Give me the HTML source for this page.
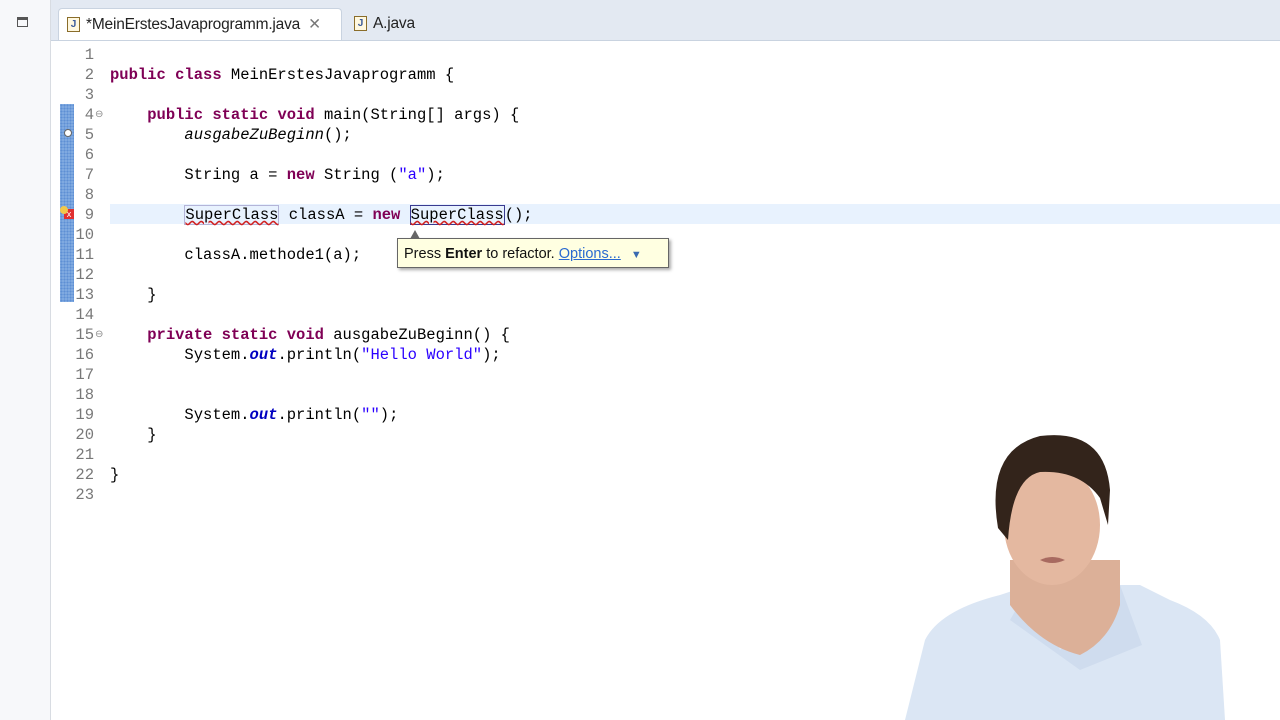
<!DOCTYPE html>
<html><head><meta charset="utf-8"><style>
body{margin:0;width:1280px;height:720px;background:#fff;position:relative;overflow:hidden;font-family:"Liberation Sans",sans-serif}
.side{position:absolute;left:0;top:0;width:50px;height:720px;background:#f7f8fa;border-right:1px solid #d8dce2}
.tabbar{position:absolute;left:51px;top:0;width:1229px;height:40px;background:#e3e9f2;border-bottom:1px solid #c9d3e0}
.tab{position:absolute;top:8px;height:32px;font-size:15.5px;line-height:32px;color:#222;letter-spacing:-0.2px}
.ic{display:inline-block;width:11px;height:13px;border:1px solid #8a6d2a;background:#fff8e0;font-size:10px;line-height:13px;text-align:center;color:#3a5a9a;font-weight:bold;vertical-align:middle;margin-right:6px;letter-spacing:0}
.gut{position:absolute;left:60px;top:104px;width:14px;height:198px;background:#7fa9e0;background-image:radial-gradient(#5e8fd4 1px,transparent 1px);background-size:3px 3px}
.ln{position:absolute;left:70px;width:24px;text-align:right;font:15.5px/20px "Liberation Mono",monospace;color:#787878}
.code{position:absolute;left:110px;font:15.5px/20px "Liberation Mono",monospace;color:#000;white-space:pre}
.k{color:#7f0055;font-weight:bold}.s{color:#2a00ff}.i{font-style:italic}.o{color:#0000c0;font-style:italic;font-weight:bold}
.hl{position:absolute;left:110px;top:204px;width:1170px;height:20px;background:#e8f2fe}
</style></head><body>
<div class="side"><div style="position:absolute;left:17px;top:17px;width:11px;height:10px;border:1px solid #555;border-top-width:3px;box-sizing:border-box"></div></div>
<div class="tabbar">
<div class="tab" style="left:7px;width:284px;background:#fff;border:1px solid #c9d3e0;border-bottom:none;border-radius:4px 4px 0 0;padding-left:8px;box-sizing:border-box"><span class="ic">J</span>*MeinErstesJavaprogramm.java <span style="color:#777;margin-left:4px">✕</span></div>
<div class="tab" style="left:303px"><span class="ic">J</span>A.java</div>
</div>
<div class="hl"></div>
<div class="gut"></div>
<div style="position:absolute;left:64px;top:129px;width:6px;height:6px;border:1px solid #666;border-radius:50%;background:#fff"></div>
<div style="position:absolute;left:64px;top:209px;width:10px;height:10px;background:#e03030;color:#fff;font-size:9px;line-height:10px;text-align:center">x</div>
<div style="position:absolute;left:60px;top:206px;width:8px;height:8px;background:#f2c84b;border-radius:50%"></div>
<div class="ln" style="top:45px">1<br>2<br>3<br>4<br>5<br>6<br>7<br>8<br>9<br>10<br>11<br>12<br>13<br>14<br>15<br>16<br>17<br>18<br>19<br>20<br>21<br>22<br>23</div>
<div style="position:absolute;left:95px;top:109px;font-size:10px;color:#888">⊖</div>
<div style="position:absolute;left:95px;top:329px;font-size:10px;color:#888">⊖</div>
<div class="code" style="top:45px">
<span class="k">public class</span> MeinErstesJavaprogramm {

    <span class="k">public static void</span> main(String[] args) {
        <span class="i">ausgabeZuBeginn</span>();

        String a = <span class="k">new</span> String (<span class="s">"a"</span>);

        <span style="border:1px solid #b4b4d8;text-decoration:underline wavy #d02020">SuperClass</span> classA = <span class="k">new</span> <span style="border:1px solid #3a3a90;text-decoration:underline wavy #d02020">SuperClass</span>();

        classA.methode1(a);

    }

    <span class="k">private static void</span> ausgabeZuBeginn() {
        System.<span class="o">out</span>.println(<span class="s">"Hello World"</span>);


        System.<span class="o">out</span>.println(<span class="s">""</span>);
    }

}
</div>
<div style="position:absolute;left:397px;top:238px;width:272px;height:30px;background:#ffffe1;border:1px solid #666;box-shadow:2px 2px 3px #aaa;font-size:14.5px;line-height:30px;padding-left:6px;box-sizing:border-box;color:#111">Press <b>Enter</b> to refactor. <span style="color:#2a6ad0;text-decoration:underline">Options...</span> <span style="color:#3a6ab0;font-size:11px;margin-left:6px">▼</span></div>
<div style="position:absolute;left:410px;top:230px;width:0;height:0;border-left:5px solid transparent;border-right:5px solid transparent;border-bottom:9px solid #666"></div>
<svg style="position:absolute;left:880px;top:420px" width="400" height="300">
<path d="M25 300 L45 220 Q60 190 120 175 L150 165 L260 165 L290 180 Q330 195 340 220 L345 300Z" fill="#dbe6f4"/>
<path d="M130 200 L150 165 L180 230 L205 205 L240 165 L262 225 L200 250Z" fill="#cfdcee"/>
<path d="M130 140 L130 185 Q160 225 200 235 Q230 220 240 185 L240 140Z" fill="#dcb098"/>
<ellipse cx="172" cy="105" rx="48" ry="60" fill="#e4b8a0"/>
<path d="M118 108 Q105 30 160 16 Q225 8 230 70 L228 105 L220 78 Q200 50 160 52 Q132 58 128 120Z" fill="#33241b"/>
<path d="M160 140 Q172 134 185 140 Q172 146 160 140Z" fill="#a86a60"/>
</svg>
</body></html>
